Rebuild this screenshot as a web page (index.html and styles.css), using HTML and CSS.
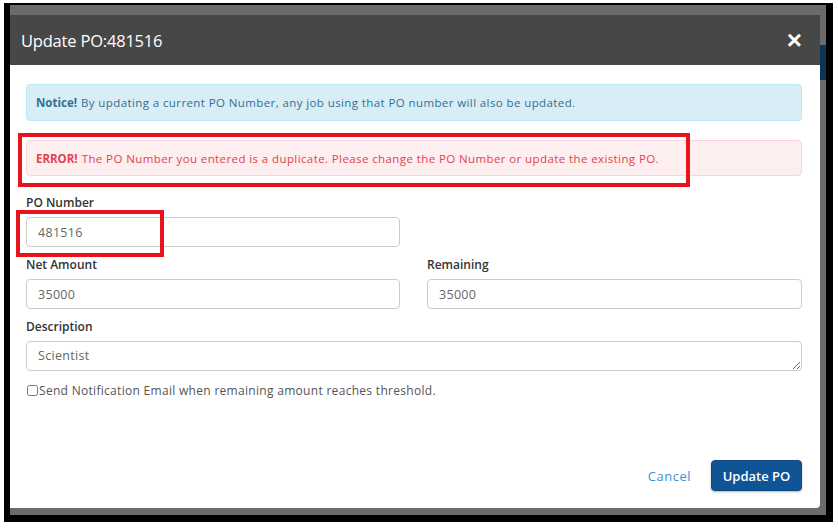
FILE: index.html
```html
<!DOCTYPE html>
<html lang="en">
<head>
    <meta charset="UTF-8">
    <meta name="viewport" content="width=device-width, initial-scale=1.0">
    <title>Update PO</title>
    <link rel="stylesheet" href="styles.css">
</head>
<body>
    <div class="frame">
        <div class="backdrop">
            <div class="page-bar"></div>
            <div class="modal">
                <div class="modal-header">
                    <h2>Update PO:481516</h2>
                    <button class="close-btn">&times;</button>
                </div>
                <div class="modal-body">
                    <div class="alert alert-info"><strong>Notice!</strong> By updating a current PO Number, any job using that PO number will also be updated.</div>
                    <div class="alert alert-error"><strong>ERROR!</strong> The PO Number you entered is a duplicate. Please change the PO Number or update the existing PO.</div>

                    <div class="form-grid">
                        <div class="field">
                            <label>PO Number</label>
                            <input type="text" value="481516">
                        </div>
                        <div></div>
                        <div class="field">
                            <label>Net Amount</label>
                            <input type="text" value="35000">
                        </div>
                        <div class="field">
                            <label>Remaining</label>
                            <input type="text" value="35000">
                        </div>
                        <div class="field wide">
                            <label>Description</label>
                            <textarea rows="1">Scientist</textarea>
                        </div>
                    </div>

                    <label class="check">
                        <input type="checkbox">
                        <span>Send Notification Email when remaining amount reaches threshold.</span>
                    </label>
                </div>
                <div class="modal-footer">
                    <a class="cancel" href="#">Cancel</a>
                    <button class="primary">Update PO</button>
                </div>

                <!-- annotation boxes from the screenshot -->
                <div class="mark mark-error"></div>
                <div class="mark mark-po"></div>
            </div>
        </div>
    </div>
</body>
</html>
```

FILE: styles.css
```css
* {
    box-sizing: border-box;
}

body {
    margin: 0;
    background: #fff;
    font-family: 'Open Sans', 'Noto Sans', sans-serif;
}

.frame {
    margin: 3px 0 0 4px;
    width: 829px;
    height: 519px;
    border-style: solid;
    border-color: #000;
    border-width: 2px 7px 7px 6px;
}

.backdrop {
    position: relative;
    height: 100%;
    background-color: #6b6b6b;
    padding: 10px 6px 7px 0;
}

.page-bar {
    position: absolute;
    right: 0;
    top: 40px;
    width: 6px;
    height: 35px;
    background: #0c3656;
}

.modal {
    position: relative;
    height: 100%;
    background: #fff;
    border-radius: 0 4px 4px 0;
    display: flex;
    flex-direction: column;
}

.modal-header {
    height: 50px;
    background: #474747;
    display: flex;
    align-items: center;
    justify-content: space-between;
    padding: 0 18px 0 11px;
}

.modal-header h2 {
    margin: 0;
    color: #fff;
    font-size: 16.5px;
    font-weight: 500;
    letter-spacing: -0.2px;
}

.close-btn {
    background: none;
    border: none;
    color: #fff;
    font-size: 26px;
    font-weight: bold;
    line-height: 1;
    padding: 0;
    cursor: pointer;
}

.modal-body {
    flex: 1;
    padding: 19px 18px 0 16px;
}

.alert {
    border: 1px solid;
    border-radius: 4px;
    font-size: 11.5px;
    letter-spacing: 0.4px;
    padding: 0 9px;
    height: 37px;
    display: flex;
    align-items: center;
}

.alert strong {
    margin-right: 4px;
    letter-spacing: 0;
}

.alert-info {
    background: #d9edf7;
    border-color: #bce8f1;
    color: #31708f;
}

.alert-error {
    margin-top: 19px;
    height: 36px;
    background: #fdeef0;
    border-color: #f9d3d8;
    color: #e2434f;
}

.form-grid {
    display: grid;
    grid-template-columns: 374px 375px;
    column-gap: 27px;
    row-gap: 9px;
    margin-top: 18px;
}

.field.wide {
    grid-column: 1 / 3;
}

.field label {
    display: block;
    font-size: 12px;
    font-weight: 600;
    color: #333;
    line-height: 18px;
    margin-bottom: 5px;
}

.field input,
.field textarea {
    display: block;
    width: 100%;
    height: 30px;
    border: 1px solid #ccc;
    border-radius: 4px;
    padding: 0 11px;
    font-family: inherit;
    font-size: 12.5px;
    letter-spacing: 0.3px;
    color: #666;
}

.field textarea {
    padding-top: 6px;
    resize: vertical;
    line-height: 16px;
}

.check {
    display: flex;
    align-items: center;
    gap: 1px;
    margin-top: 11px;
    font-size: 12px;
    letter-spacing: 0.3px;
    color: #555;
}

.check input {
    margin: 0 0 0 1px;
    width: 11px;
    height: 11px;
}

.modal-footer {
    display: flex;
    justify-content: flex-end;
    align-items: center;
    gap: 20px;
    padding: 0 18px 17px 0;
}

.cancel {
    color: #3f8fd2;
    text-decoration: none;
    font-size: 13px;
    letter-spacing: 0.5px;
}

.primary {
    background: #0f5596;
    color: #fff;
    border: 1px solid #0b4a85;
    border-radius: 4px;
    height: 31px;
    width: 91px;
    font-family: inherit;
    font-size: 13px;
    font-weight: 600;
    box-shadow: 0 1px 2px rgba(0,0,0,0.3);
    cursor: pointer;
}

.mark {
    position: absolute;
    border: 4px solid #e8131d;
}

.mark-error {
    left: 8px;
    top: 118px;
    width: 672px;
    height: 54px;
}

.mark-po {
    left: 6px;
    top: 195px;
    width: 148px;
    height: 47px;
}
```
